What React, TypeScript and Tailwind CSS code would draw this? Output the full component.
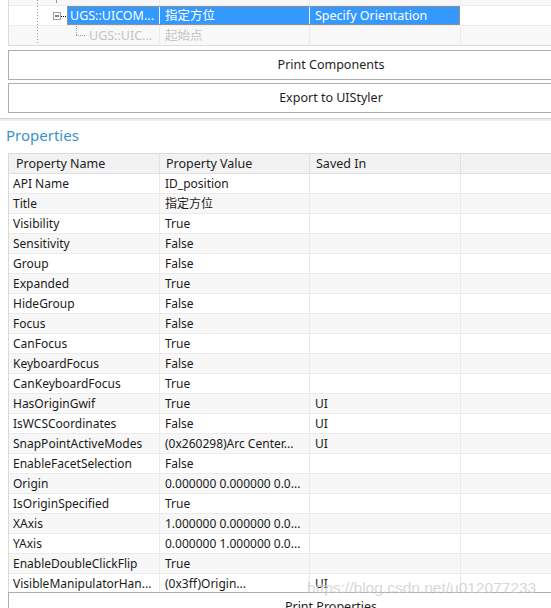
import React from "react";

const FONT = { fontFamily: '"Noto Sans", "Noto Sans CJK SC", sans-serif' };

const rows: [string, string, string][] = [
  ["API Name", "ID_position", ""],
  ["Title", "指定方位", ""],
  ["Visibility", "True", ""],
  ["Sensitivity", "False", ""],
  ["Group", "False", ""],
  ["Expanded", "True", ""],
  ["HideGroup", "False", ""],
  ["Focus", "False", ""],
  ["CanFocus", "True", ""],
  ["KeyboardFocus", "False", ""],
  ["CanKeyboardFocus", "True", ""],
  ["HasOriginGwif", "True", "UI"],
  ["IsWCSCoordinates", "False", "UI"],
  ["SnapPointActiveModes", "(0x260298)Arc Center...", "UI"],
  ["EnableFacetSelection", "False", ""],
  ["Origin", "0.000000 0.000000 0.0...", ""],
  ["IsOriginSpecified", "True", ""],
  ["XAxis", "1.000000 0.000000 0.0...", ""],
  ["YAxis", "0.000000 1.000000 0.0...", ""],
  ["EnableDoubleClickFlip", "True", ""],
  ["VisibleManipulatorHan...", "(0x3ff)Origin...", "UI"],
];

const TreePanel = () => {
  return (
    <div className="relative h-[46px] w-[646px] overflow-hidden border-b border-l border-[#dcdcdc]">
      <div className="-mt-[15px] flex flex-col">
        {/* row above, scrolled almost out of view */}
        <div className="flex h-[20px] bg-[#f8f8f8] text-[13px] leading-[12px] text-[#c4c4c4]">
          <div className="w-[151px] shrink-0 border-r border-[#ececec]" />
          <div className="w-[150px] shrink-0 border-r border-[#ececec]" />
          <div className="w-[151px] shrink-0 border-r border-[#ececec] pl-[5px]">Specify Point</div>
          <div className="flex-1" />
        </div>
        <div className="flex h-[20px] border-t border-[#ececec] bg-white text-[12.5px] leading-[18px] text-white">
          <div className="w-[58px] shrink-0" />
          <div className="flex w-[393px] shrink-0 border border-dotted border-[#f08a24] bg-[#3399ff]">
            <div className="w-[92px] shrink-0 whitespace-nowrap border-r border-[#e8f2ff] pl-[2px]">UGS::UICOM...</div>
            <div className="w-[150px] shrink-0 border-r border-[#e8f2ff] pl-[5px]">指定方位</div>
            <div className="flex-1 pl-[5px]">Specify Orientation</div>
          </div>
          <div className="flex-1" />
        </div>
        <div className="flex h-[20px] border-t border-[#ececec] bg-[#f8f8f8] text-[12.5px] leading-[19px] text-[#c4c4c4]">
          <div className="w-[151px] shrink-0 border-r border-[#ececec] pl-[80px]">UGS::UIC...</div>
          <div className="w-[150px] shrink-0 border-r border-[#ececec] pl-[5px]">起始点</div>
          <div className="w-[151px] shrink-0 border-r border-[#ececec]" />
          <div className="flex-1" />
        </div>
      </div>
      <svg className="pointer-events-none absolute left-0 top-0" width="100" height="46">
        <line x1="28.5" y1="0" x2="28.5" y2="46" stroke="#9a9a9a" strokeDasharray="1 2" />
        <line x1="47.5" y1="0" x2="47.5" y2="3" stroke="#9a9a9a" />
        <rect x="44.5" y="12.5" width="7" height="7" fill="#fff" stroke="#a0a0a0" />
        <line x1="46" y1="16" x2="50" y2="16" stroke="#000" />
        <line x1="52" y1="16.5" x2="58" y2="16.5" stroke="#000" strokeDasharray="1 1" />
        <line x1="67.5" y1="26" x2="67.5" y2="35" stroke="#9a9a9a" strokeDasharray="1 1" />
        <line x1="67" y1="35.5" x2="77" y2="35.5" stroke="#9a9a9a" strokeDasharray="1 1" />
      </svg>
    </div>
  );
};

const Button = ({ label }: { label: string }) => (
  <div className="flex h-[30px] w-[646px] items-center justify-center border border-[#adadad] bg-white text-[12.5px] text-[#1e1e1e]">
    {label}
  </div>
);

const PropertyTable = () => {
  return (
    <div className="h-[439px] w-[646px] overflow-hidden border-l border-t border-[#dadada]">
      <div className="flex h-[20px] border-b border-[#e0e0e0] bg-[#f2f2f2] text-[12.5px] leading-[19px] text-[#222]">
        <div className="w-[151px] shrink-0 border-r border-[#e2e2e2] pl-[7px]">Property Name</div>
        <div className="w-[150px] shrink-0 border-r border-[#e2e2e2] pl-[6px]">Property Value</div>
        <div className="w-[151px] shrink-0 border-r border-[#e2e2e2] pl-[6px]">Saved In</div>
        <div className="flex-1" />
      </div>
      {rows.map(([name, value, saved], i) => (
        <div
          key={name}
          className={
            "flex h-[20px] border-b border-[#ebebeb] text-[12px] leading-[19px] text-[#1a1a1a] " +
            (i % 2 === 1 ? "bg-[#f7f7f7]" : "bg-white")
          }
        >
          <div className="w-[151px] shrink-0 whitespace-nowrap border-r border-[#ebebeb] pl-[4px]">{name}</div>
          <div className="w-[150px] shrink-0 whitespace-nowrap border-r border-[#ebebeb] pl-[5px]">{value}</div>
          <div className="w-[151px] shrink-0 border-r border-[#ebebeb] pl-[5px]">{saved}</div>
          <div className="flex-1" />
        </div>
      ))}
    </div>
  );
};

export default function App() {
  return (
    <div className="relative h-[608px] w-[551px] overflow-hidden bg-white" style={FONT}>
      <div className="flex flex-col pl-[8px]">
        <TreePanel />
        <div className="mt-[4px] flex flex-col gap-[3px]">
          <Button label="Print Components" />
          <Button label="Export to UIStyler" />
        </div>
      </div>
      <div className="mt-[5px] h-[3px] w-full border-t border-[#d4d4d4] bg-[#ececec]" />
      <div className="flex flex-col">
        <div className="h-[32px] pl-[6px] text-[15px] leading-[28px] text-[#3a93cc]">Properties</div>
        <div className="pl-[8px]">
          <PropertyTable />
          <Button label="Print Properties" />
        </div>
      </div>
      <div
        className="pointer-events-none absolute left-[307px] top-[578px] text-[15.5px] leading-[20px] text-[#c8c8c8] opacity-70"
        style={{ fontFamily: '"Liberation Sans", sans-serif' }}
      >
        https://blog.csdn.net/u012077233
      </div>
    </div>
  );
}
